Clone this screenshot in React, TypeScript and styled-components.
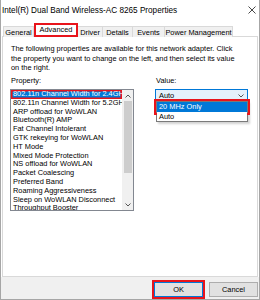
import React from "react";
import styled, { createGlobalStyle } from "styled-components";

const Global = createGlobalStyle`
  html, body { margin: 0; padding: 0; width: 260px; height: 300px; overflow: hidden; background: #fff; }
  body { font-family: "Liberation Sans", Arial, sans-serif; color: #000; }
  * { box-sizing: border-box; }
`;

const RED = "#e8141b";
const BLUE = "#0078d7";

const Window = styled.div`
  width: 260px;
  height: 300px;
  display: flex;
  flex-direction: column;
  background: #fff;
  border: 1px solid #a6a6a6;
  border-top: none;
`;

const TitleBar = styled.div`
  height: 20px;
  flex: none;
  display: flex;
  align-items: center;
  justify-content: space-between;
  padding: 0 3px 0 1px;
  font-size: 8.2px;
  background: #fff;
`;

const TabStrip = styled.div`
  height: 17px;
  flex: none;
  display: flex;
  align-items: flex-end;
  padding-left: 2px;
  margin-bottom: -1px;
  position: relative;
  z-index: 1;
`;

const Tab = styled.div<{ $w: number; $active?: boolean }>`
  width: ${(p) => p.$w}px;
  height: ${(p) => (p.$active ? 14 : 11)}px;
  margin-left: ${(p) => (p.$active ? 0 : -1)}px;
  display: flex;
  align-items: center;
  justify-content: center;
  font-size: 7.4px;
  white-space: nowrap;
  background: ${(p) => (p.$active ? "#fff" : "#f0f0f0")};
  border: ${(p) => (p.$active ? `2px solid ${RED}` : "1px solid #d9d9d9")};
  border-bottom: ${(p) => (p.$active ? `2px solid ${RED}` : "none")};
  padding-bottom: ${(p) => (p.$active ? 2 : 0)}px;
  position: relative;
  z-index: ${(p) => (p.$active ? 2 : 0)};
  &:first-child { margin-left: 0; }
`;

const Panel = styled.div`
  flex: 1;
  margin: 0 1px;
  border: 1px solid #d9d9d9;
  background: #fff;
  padding: 7px 7px 0 7px;
  display: flex;
  flex-direction: column;
`;

const Description = styled.p`
  margin: 0 0 0 1px;
  font-size: 7.4px;
  line-height: 9.5px;
  white-space: nowrap;
`;

const Columns = styled.div`
  display: flex;
  gap: 21px;
  margin-top: 3px;
`;

const Column = styled.div<{ $w: number }>`
  width: ${(p) => p.$w}px;
  display: flex;
  flex-direction: column;
`;

const Label = styled.div`
  font-size: 7.4px;
  line-height: 9.5px;
  margin: 0 0 4px 1px;
`;

const ListBox = styled.div`
  height: 122px;
  border: 1px solid #828790;
  display: flex;
  overflow: hidden;
  background: #fff;
`;

const Items = styled.div`
  flex: 1;
  min-width: 0;
  overflow: hidden;
  display: flex;
  flex-direction: column;
`;

const Item = styled.div<{ $selected?: boolean }>`
  height: 8.8px;
  flex: none;
  line-height: 8.8px;
  font-size: 7.4px;
  padding-left: 2px;
  white-space: nowrap;
  overflow: hidden;
  color: ${(p) => (p.$selected ? "#fff" : "#000")};
  background: ${(p) => (p.$selected ? BLUE : "transparent")};
  box-shadow: ${(p) => (p.$selected ? `inset 0 0 0 1.5px ${RED}` : "none")};
`;

const ScrollBar = styled.div`
  width: 11px;
  flex: none;
  background: #f0f0f0;
  display: flex;
  flex-direction: column;
  align-items: center;
`;

const ScrollArrow = styled.div`
  height: 11px;
  flex: none;
  display: flex;
  align-items: center;
  justify-content: center;
`;

const Thumb = styled.div`
  width: 8px;
  height: 72px;
  background: #cdcdcd;
`;

const Track = styled.div`
  flex: 1;
`;

const ComboWrap = styled.div`
  position: relative;
`;

const Combo = styled.div`
  height: 13px;
  background: #e5f1fb;
  border: 1px solid ${BLUE};
  display: flex;
  align-items: center;
  justify-content: space-between;
  padding: 0 3px 0 3px;
  font-size: 7.4px;
`;

const Popup = styled.div`
  position: absolute;
  left: 1px;
  right: 0;
  top: calc(100% - 1px);
  background: #fff;
  border: 1px solid #7a7a7a;
  box-shadow: 2px 2px 2px rgba(0, 0, 0, 0.18);
  padding: 0;
`;

const Option = styled.div<{ $selected?: boolean }>`
  height: 9.5px;
  line-height: 9.5px;
  font-size: 7.4px;
  padding-left: 2px;
  color: ${(p) => (p.$selected ? "#fff" : "#000")};
  background: ${(p) => (p.$selected ? BLUE : "#fff")};
  outline: ${(p) => (p.$selected ? `2px solid ${RED}` : "none")};
  outline-offset: 1px;
  position: relative;
`;

const ButtonBar = styled.div`
  height: 22px;
  flex: none;
  background: #f0f0f0;
  display: flex;
  justify-content: flex-end;
  align-items: center;
  gap: 6px;
  padding: 2px 1px 0 0;
`;

const Button = styled.div<{ $primary?: boolean; $highlight?: boolean }>`
  width: 49px;
  height: 15px;
  display: flex;
  align-items: center;
  justify-content: center;
  font-size: 7.4px;
  background: #e1e1e1;
  border: 1px solid ${(p) => (p.$primary ? BLUE : "#adadad")};
  outline: ${(p) => (p.$highlight ? `2px solid ${RED}` : "none")};
  outline-offset: 0;
`;

const Close = () => (
  <svg width="8" height="8" viewBox="0 0 8 8">
    <path d="M0.5 0.5 L7.5 7.5 M7.5 0.5 L0.5 7.5" stroke="#333" strokeWidth="0.9" fill="none" />
  </svg>
);

const Chevron = ({ up }: { up?: boolean }) => (
  <svg width="6" height="4" viewBox="0 0 6 4">
    <path d={up ? "M0.5 3.5 L3 1 L5.5 3.5" : "M0.5 0.5 L3 3 L5.5 0.5"} stroke="#444" strokeWidth="0.9" fill="none" />
  </svg>
);

const tabs: { label: string; w: number; active?: boolean }[] = [
  { label: "General", w: 31 },
  { label: "Advanced", w: 44, active: true },
  { label: "Driver", w: 26 },
  { label: "Details", w: 31 },
  { label: "Events", w: 33 },
  { label: "Power Management", w: 69 },
];

const properties = [
  "802.11n Channel Width for 2.4GHz",
  "802.11n Channel Width for 5.2GHz",
  "ARP offload for WoWLAN",
  "Bluetooth(R) AMP",
  "Fat Channel Intolerant",
  "GTK rekeying for WoWLAN",
  "HT Mode",
  "Mixed Mode Protection",
  "NS offload for WoWLAN",
  "Packet Coalescing",
  "Preferred Band",
  "Roaming Aggressiveness",
  "Sleep on WoWLAN Disconnect",
  "Throughput Booster",
];

export default function App() {
  return (
    <>
      <Global />
      <Window>
        <TitleBar>
          <span>Intel(R) Dual Band Wireless-AC 8265 Properties</span>
          <Close />
        </TitleBar>
        <TabStrip>
          {tabs.map((t) => (
            <Tab key={t.label} $w={t.w} $active={t.active}>
              {t.label}
            </Tab>
          ))}
        </TabStrip>
        <Panel>
          <Description>
            The following properties are available for this network adapter. Click
            <br />
            the property you want to change on the left, and then select its value
            <br />
            on the right.
          </Description>
          <Columns>
            <Column $w={124}>
              <Label>Property:</Label>
              <ListBox>
                <Items>
                  {properties.map((p, i) => (
                    <Item key={p} $selected={i === 0}>
                      {p}
                    </Item>
                  ))}
                </Items>
                <ScrollBar>
                  <ScrollArrow>
                    <Chevron up />
                  </ScrollArrow>
                  <Thumb />
                  <Track />
                  <ScrollArrow>
                    <Chevron />
                  </ScrollArrow>
                </ScrollBar>
              </ListBox>
            </Column>
            <Column $w={93}>
              <Label>Value:</Label>
              <ComboWrap>
                <Combo>
                  <span>Auto</span>
                  <Chevron />
                </Combo>
                <Popup>
                  <Option $selected>20 MHz Only</Option>
                  <Option>Auto</Option>
                </Popup>
              </ComboWrap>
            </Column>
          </Columns>
        </Panel>
        <ButtonBar>
          <Button $primary $highlight>OK</Button>
          <Button>Cancel</Button>
        </ButtonBar>
      </Window>
    </>
  );
}
